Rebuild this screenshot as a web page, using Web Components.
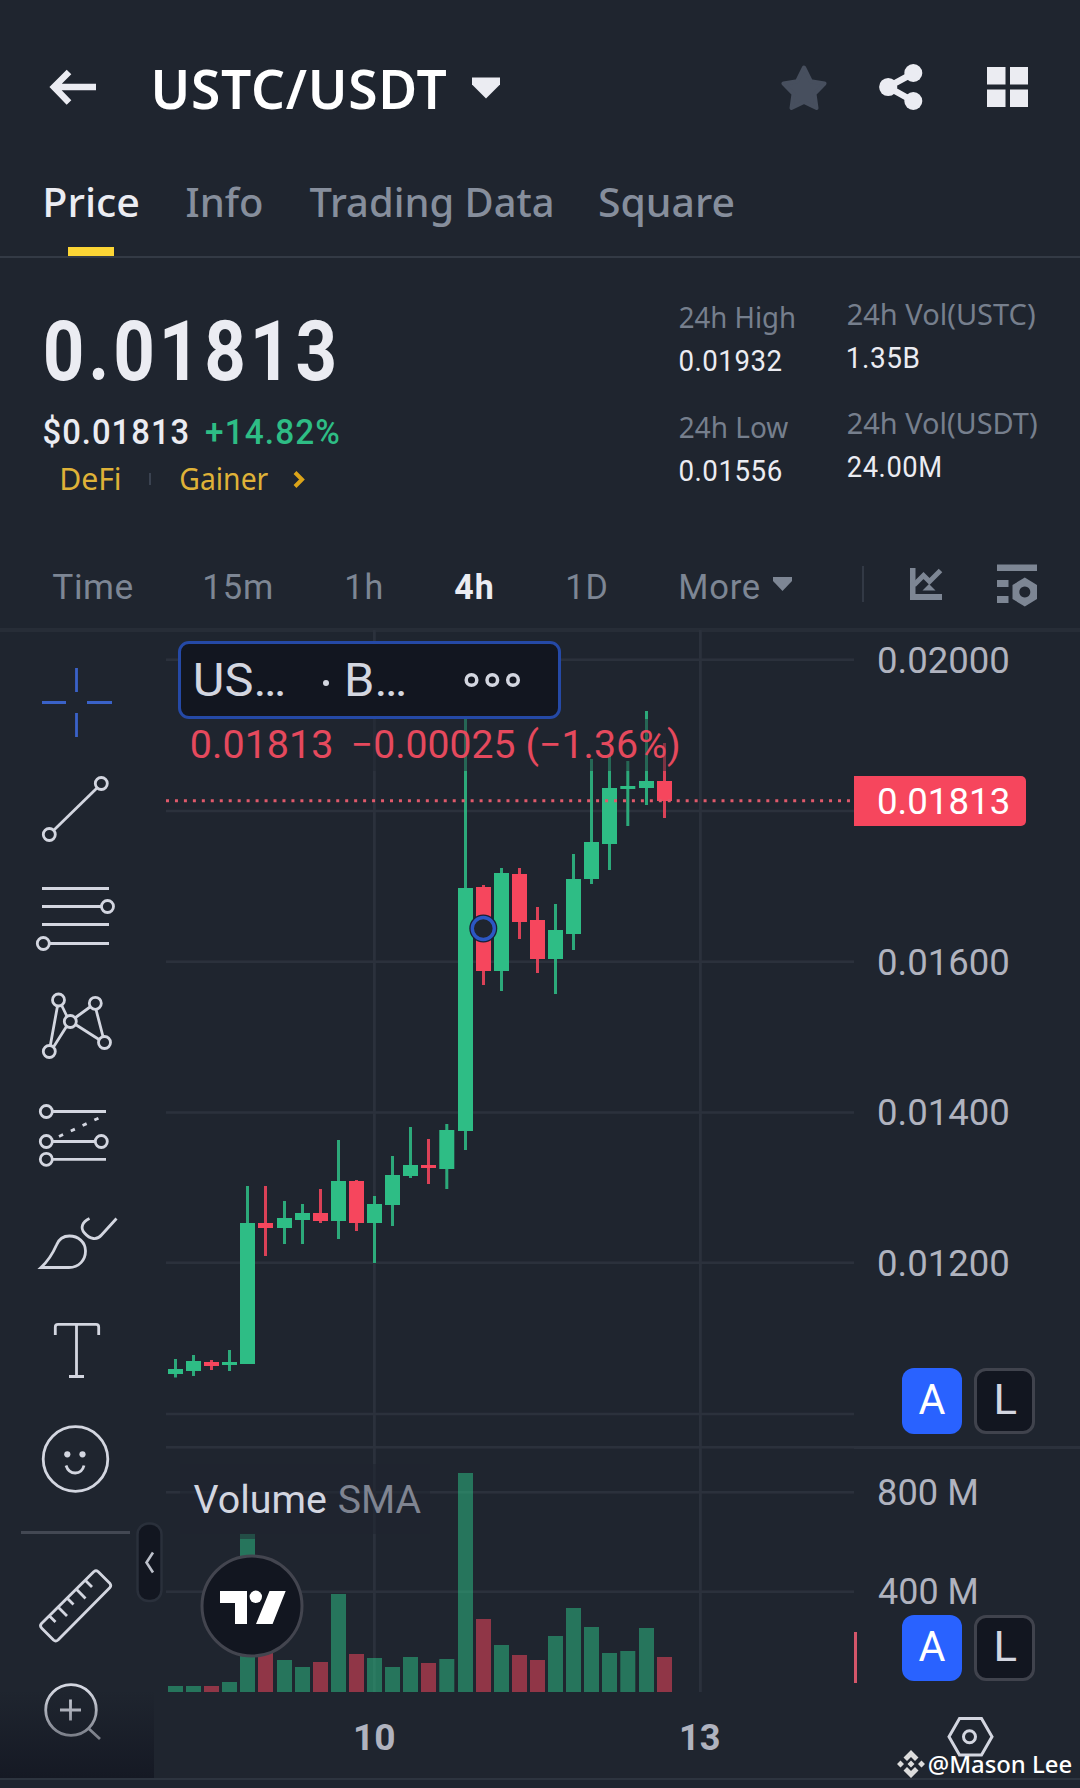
<!DOCTYPE html>
<html lang="en">
<head>
<meta charset="utf-8">
<title>USTC/USDT</title>
<style>
html,body{margin:0;background:#1f252f}
body{width:1080px;height:1788px;overflow:hidden;font-family:Roboto,"Noto Sans",sans-serif}
</style>
</head>
<body>
<trade-screen>
  <app-header pair="USTC/USDT"></app-header>
  <nav-tabs></nav-tabs>
  <ticker-summary></ticker-summary>
  <interval-bar></interval-bar>
  <chart-panel></chart-panel>
</trade-screen>
<script>
const define = (name, html, setup) => {
  const tpl = document.createElement('template');
  tpl.innerHTML = html;
  customElements.define(name, class extends HTMLElement {
    constructor() {
      super();
      this.attachShadow({mode: 'open'}).appendChild(tpl.content.cloneNode(true));
    }
    connectedCallback() { if (setup) setup(this, this.shadowRoot); }
  });
};

// A one-line label whose box is its ink: w is the ink width, h the cap height.
// k narrows the glyphs and gives the freed width to letter spacing.
const ctx = document.createElement('canvas').getContext('2d');
define('fit-text', `<style>
:host{display:block;flex:none}
span{display:block;white-space:nowrap;transform-origin:0 0;width:max-content}
</style><span><slot></slot></span>`, (el, root) => {
  const w = +el.getAttribute('w'), h = +el.getAttribute('h'), k = +(el.getAttribute('k') || 1);
  const cs = getComputedStyle(el), span = root.querySelector('span');
  const text = el.textContent.trim();
  ctx.font = `${cs.fontWeight} 200px ${cs.fontFamily}`;
  const cap = ctx.measureText('H').actualBoundingBoxAscent / 200;
  const m = ctx.measureText(text);
  const fs = h / cap;
  const ink = (m.actualBoundingBoxRight + m.actualBoundingBoxLeft) / 200 * fs;
  const s = w / ink * k;
  const a = Math.round(m.fontBoundingBoxAscent / 200 * fs), d = Math.round(m.fontBoundingBoxDescent / 200 * fs);
  el.style.width = w + 'px';
  el.style.height = h + 'px';
  span.style.fontSize = fs + 'px';
  span.style.lineHeight = h + 'px';
  if (k !== 1) span.style.letterSpacing = ink * (1 / k - 1) / (text.length - 1) + 'px';
  span.style.transform = `translate(${m.actualBoundingBoxLeft / 200 * fs * s}px,${h - (h / 2 + (a - d) / 2)}px) scaleX(${s})`;
});

define('app-header', `<style>
:host{display:flex;height:172px;box-sizing:border-box;padding:64px 51px 0 49px;align-items:flex-start;color:#fff}
svg{display:block;flex:none}
fit-text{font-family:"Noto Sans",sans-serif;font-weight:600;margin:6.500px 0 0 57px}
.caret{margin:13px 0 0 26px}
.actions{margin-left:auto;display:flex;gap:52px}
</style>
<svg width="49" height="46" viewBox="49 64 49 46"><path d="M96 87H55M69 72L54 87L69 102.500" fill="none" stroke="#ebecf2" stroke-width="6.500"/></svg>
<fit-text w="291" h="38.500" k=".98">USTC/USDT</fit-text>
<svg class="caret" width="28" height="22" viewBox="0 0 28 22"><path d="M0 .5H28V7.500L14 21.500L0 7.500Z" fill="#ebecf2"/></svg>
<div class="actions">
<svg width="46" height="48" viewBox="781.500 64.500 46 48"><path d="M804.500 68L811.300 81.700L825 84L815 94.300L817 108.500L804.500 102.500L792 108.500L794 94.300L784 84L797.700 81.700Z" fill="#474f5e" stroke="#474f5e" stroke-width="4" stroke-linejoin="round"/></svg>
<svg width="44" height="48" viewBox="879 64 44 48"><g fill="#ebecf2" stroke="#ebecf2"><path d="M913 73.300L888 87L913 101" fill="none" stroke-width="6.500"/><g stroke="none"><circle cx="888.200" cy="87" r="9.100"/><circle cx="913.300" cy="73" r="9"/><circle cx="913.300" cy="101" r="9"/></g></g></svg>
<svg style="margin-left:12px" width="42" height="48" viewBox="987 64 42 48"><path d="M987 67h18.500v17.500H987zM1010 67h18v17.500h-18zM987 89.500h18.500V107H987zM1010 89.500h18V107h-18z" fill="#ebecf2"/></svg>
</div>`);

define('nav-tabs', `<style>
:host{display:flex;height:86px;box-sizing:border-box;border-bottom:2px solid #333a45;padding:17.300px 0 0 46px;font-family:"Noto Sans",sans-serif;font-weight:500;color:#868e9c}
.tab{display:flex;flex-direction:column;align-items:center;justify-content:space-between}
.on{color:#ebecf2}
.on::after{content:"";width:46px;height:9px;background:#fcd535;margin-right:2px}
.i{margin-left:49px}.t{margin-left:48.500px}.s{margin-left:48.500px}
</style>
<div class="tab on"><fit-text w="92" h="28.500">Price</fit-text></div>
<div class="tab i"><fit-text w="74.500" h="28.500">Info</fit-text></div>
<div class="tab t"><fit-text w="241.500" h="28.500">Trading Data</fit-text></div>
<div class="tab s"><fit-text w="133" h="28.500">Square</fit-text></div>`);

define('stat-cell', `<style>
:host{display:block}
.l{color:#767f8d;font-family:"Noto Sans",sans-serif}
.v{color:#ebecf2;margin-top:22px;height:21px}
</style><div class="l"></div><div class="v"></div>`, (el, root) => {
  const put = (sel, key, k) => {
    const t = document.createElement('fit-text');
    t.textContent = el.getAttribute(key);
    t.setAttribute('w', el.getAttribute(key + '-w'));
    t.setAttribute('h', 21);
    t.setAttribute('k', k);
    root.querySelector(sel).replaceChildren(t);
  };
  put('.l', 'label', 1); put('.v', 'value', .97);
});

define('ticker-summary', `<style>
:host{display:flex;height:290px;box-sizing:border-box;padding-top:46px;color:#ebecf2}
.left{width:680px;padding:17px 0 0 46px;box-sizing:border-box}
.big{font-weight:700}
.row{display:flex}
.fiat{margin:39px 0 0 -2px;font-weight:500}
.up{color:#2ebd85;margin-left:18.500px}
.tags{margin:24.500px 0 0 16px;color:#dfb238;font-family:"Noto Sans",sans-serif}
.sep{width:2px;height:12px;background:#3a4250;margin:4px 29.500px 0}
svg{margin:2px 0 0 25px}
.c1{width:167.500px;padding-top:3px}
.c1 stat-cell+stat-cell{margin-top:46px}
.c2 stat-cell+stat-cell{margin-top:45px}
</style>
<div class="left">
<fit-text class="big" w="288" h="59" k=".92">0.01813</fit-text>
<div class="row fiat"><fit-text w="143.500" h="25" k=".95">$0.01813</fit-text><fit-text class="up" w="132.500" h="25" k=".95">+14.82%</fit-text></div>
<div class="row tags"><fit-text w="57.500" h="21.500">DeFi</fit-text><div class="sep"></div><fit-text w="87" h="21.500">Gainer</fit-text><svg width="12" height="17" viewBox="0 0 12 17"><path d="M2 1.500L9 8.500L2 15.500" fill="none" stroke="#dba419" stroke-width="4"/></svg></div>
</div>
<div class="c1"><stat-cell label="24h High" label-w="114" value="0.01932" value-w="101"></stat-cell><stat-cell label="24h Low" label-w="108" value="0.01556" value-w="101"></stat-cell></div>
<div class="c2"><stat-cell label="24h Vol(USTC)" label-w="186.500" value="1.35B" value-w="70.500"></stat-cell><stat-cell label="24h Vol(USDT)" label-w="188.500" value="24.00M" value-w="92"></stat-cell></div>`);

define('interval-bar', `<style>
:host{display:flex;height:80px;box-sizing:border-box;padding:16px 0 0 53px;color:#7d8694}
fit-text{margin-top:10px}
.on{color:#ebecf2;font-weight:700}
.caret{margin:13px 0 0 14px}
.bar{width:2px;height:36px;background:#323945;margin:2px 46px 0 70px}
</style>
<fit-text w="79" h="25" k=".98">Time</fit-text>
<fit-text style="margin-left:73px" w="66" h="25" k=".97">15m</fit-text>
<fit-text style="margin-left:75.500px" w="34" h="25" k=".97">1h</fit-text>
<fit-text style="margin-left:74px" class="on" w="37" h="25" k=".97">4h</fit-text>
<fit-text style="margin-left:76px" w="38" h="25" k=".97">1D</fit-text>
<fit-text style="margin-left:75.500px" w="78" h="25" k=".97">More</fit-text>
<svg class="caret" width="19" height="14" viewBox="0 0 19 14"><path d="M0 0H19V4L9.500 14L0 4Z" fill="#7d8694"/></svg>
<div class="bar"></div>
<svg width="34" height="44" viewBox="911 564 34 44"><g fill="#7d8694"><path d="M911 568h5.500v26H943v6H911z"/><path d="M915 585L924.500 575.500L930.500 581.500L941.500 570.500" fill="none" stroke="#7d8694" stroke-width="5"/><path d="M923.500 590.500L930 584L936.500 590.500Z"/></g></svg>
<svg style="margin-left:53px" width="42" height="44" viewBox="998 564 42 44"><path fill="#7d8694" fill-rule="evenodd" d="M998 564.500h40v6.500h-40zM998 580h11.500v7H998zM998 596h11.500v7H998zM1025.800 577.500L1038 585V599L1025.800 606.500L1013.500 599V585ZM1025.800 586.500a5.500 5.500 0 1 0 .01 0Z"/></svg>`);

define('tool-rail', `<style>
:host{display:flex;flex-direction:column;width:154px}
svg{display:block;flex:none;fill:none;stroke:#d3d6e0;stroke-width:2.800}
.foot{background:linear-gradient(#1f252f00 30px,#151924 100%)}
.foot svg{mask-image:linear-gradient(#000 30px,#0008 75px)}
</style>
<svg width="154" height="115" viewBox="0 633 154 115"><path stroke="#3a62c8" d="M76.500 668V692M76.500 713V737M42 702.500H66M87 702.500H112"/></svg>
<svg width="154" height="112" viewBox="0 748 154 112"><path d="M54 830L97 788"/><circle cx="101.300" cy="783.500" r="6"/><circle cx="49.300" cy="834.500" r="6"/></svg>
<svg width="154" height="110" viewBox="0 860 154 110"><path d="M42 888.500H109M42 906.500H101M42 924.500H109M50 943.500H109"/><circle cx="107.500" cy="906.500" r="6"/><circle cx="43.300" cy="943.500" r="6"/></svg>
<svg width="154" height="110" viewBox="0 970 154 110"><path d="M57.500 1006L50.300 1045.500M61.500 1005L67 1016.500M53.500 1047L66.500 1026.500M75 1018L90 1007M75.500 1024.500L99 1039.500M96 1009.500L103 1036.500"/><circle cx="58.500" cy="1000" r="6"/><circle cx="95.300" cy="1003.300" r="6"/><circle cx="70.300" cy="1021.500" r="6"/><circle cx="104.500" cy="1042.500" r="6"/><circle cx="49.300" cy="1051.500" r="6"/></svg>
<svg width="154" height="110" viewBox="0 1080 154 110"><path d="M52.500 1111.500H106M52.500 1141.500H95M52.500 1159.300H106"/><path d="M59 1136.500L102 1116.500" stroke-dasharray="4.500 8.500"/><circle cx="46.300" cy="1111.500" r="6"/><circle cx="101.300" cy="1141.500" r="6"/><circle cx="46.300" cy="1141.500" r="6"/><circle cx="46.300" cy="1159.300" r="6"/></svg>
<svg width="154" height="105" viewBox="0 1190 154 105"><path d="M41 1267.500H69C79 1267.500 85.500 1260 85.500 1251C85.500 1242 78 1236 69.500 1236C62 1236 58.500 1240 56.500 1245C53 1253 47.500 1261.500 41 1267.500ZM89.500 1218.500C82 1222 80 1228 84.500 1233C90 1239.500 97 1240.500 101.500 1235L116.500 1218.500"/></svg>
<svg width="154" height="105" viewBox="0 1295 154 105"><path d="M55.300 1335V1327Q55.300 1324.300 58 1324.300H96Q98.700 1324.300 98.700 1327V1335M76.500 1324V1376.500M69 1376.500H84"/></svg>
<svg width="154" height="125" viewBox="0 1400 154 125"><circle cx="75.500" cy="1459" r="32.300"/><path d="M66 1465.500Q68.500 1473 75.300 1473T84 1465.500"/><g fill="#d3d6e0" stroke="none"><circle cx="67.300" cy="1454.300" r="3.100"/><circle cx="82.500" cy="1454.300" r="3.100"/></g></svg>
<svg width="154" height="135" viewBox="0 1525 154 135"><path stroke="#434853" d="M21 1532.500H130"/><path stroke-linejoin="round" d="M94 1571.500Q96 1570 98 1571.500L110 1583.500Q111.500 1585.500 110 1587.500L58 1640Q55.700 1642 53.500 1640L41.500 1628Q39.500 1625.500 41.500 1623.500ZM49.500 1616L55.500 1622M58.500 1607.500L67 1616M67.500 1598.500L73.500 1604.500M76.700 1589.500L85.500 1598.500M85.500 1580.500L92 1587"/></svg>
<div class="foot"><svg width="154" height="118" viewBox="0 1659.500 154 118"><circle cx="71" cy="1709.500" r="25.300"/><path d="M60 1709.500H81M70.500 1699V1720M88 1727.500L100 1738.500"/></svg></div>`);

const G = '#2ebd85', R = '#f6465d';
// x, high, body top, body bottom, low, up, volume top
const candles = [
[175.5,1359,1369,1374,1377.5,1,1686],[193.5,1355,1361,1371,1376,1,1686],[211.5,1360,1362,1366,1370,0,1686],[229.5,1350,1362,1365,1371,1,1682],
[247.5,1186,1223,1364,1364,1,1534],[265.5,1186,1223,1228,1256,0,1640],[284.5,1201,1218,1228,1244,1,1660],[302.5,1204,1213,1220,1244,1,1667],
[320.5,1189,1213,1221,1223,0,1662],[338.5,1140,1181,1221,1239,1,1594],[356.5,1180,1181,1223,1231,0,1654],[374.5,1196,1204,1223,1263,1,1658],
[392.5,1156,1175,1205,1226,1,1667],[410.5,1127,1165,1176,1178,1,1657],[428.5,1139,1165,1168,1184,0,1663],[446.8,1124,1130,1169,1189,1,1659],
[465.5,700,888,1131,1150,1,1473],[483.5,885,887,971,985,0,1619],[501.5,868,873,971,991,1,1645],[519.5,868,874,922,939,0,1655],
[537.5,907,920,959,973,0,1660],[555.5,904,930,959,994,1,1636],[573.5,854,879,934,950,1,1608],[591.5,759,842,879,884,1,1627],
[609.5,756,788,844,870,1,1653],[627.8,761,786,789,826,1,1651],[646.5,711,781,788,805,1,1628],[664.5,743,781,801,818,0,1657]];

define('candle-canvas', `<style>:host{display:block;width:700px;height:1066px}svg{display:block}</style>
<svg width="700" height="1066" viewBox="154 628 700 1066"></svg>`, (el, root) => {
  let s = '<g fill="#2b313c">';
  for (const x of [373, 699]) s += `<rect x="${x}" y="630" width="2.800" height="1062"/>`;
  for (const y of [659.7, 811, 961.7, 1112.5, 1262.7, 1414, 1492.3, 1591.7]) s += `<rect x="166" y="${y - 1.3}" width="688" height="2.600"/>`;
  s += '<rect x="166" y="1446" width="688" height="2.600"/></g>';
  s += '<rect x="180" y="1464" width="250" height="70" fill="#1f252f" opacity=".55"/>';
  for (const [x,,,,, up, v] of candles) s += `<rect x="${x - 7.5}" y="${v}" width="15" height="${1692 - v}" fill="${up ? G : R}" opacity=".53"/>`;
  s += '<rect x="238" y="1533" width="20" height="6" fill="#1f252f" opacity=".5"/>';
  for (const [x, hi, t, b, lo, up] of candles) {
    const c = up ? G : R;
    s += `<rect x="${x - 1.5}" y="${hi}" width="3" height="${lo - hi}" fill="${c}" opacity=".87"/><rect x="${x - 7.5}" y="${t}" width="15" height="${b - t}" fill="${c}"/>`;
  }
  s += `<path d="M166 800.700H854" stroke="#e0596b" stroke-width="2.900" stroke-dasharray="3 5.960"/>`;
  s += '<rect x="180" y="719" width="505" height="52" fill="#1f252f" opacity=".5"/>';
  s += '<circle cx="483.300" cy="928.500" r="14" fill="#182035"/><circle cx="483.300" cy="928.500" r="11" fill="#1f252f" stroke="#2c57c4" stroke-width="3.400"/>';
  root.querySelector('svg').innerHTML = s;
});

define('scale-buttons', `<style>
:host{display:flex;gap:12px;height:66px;padding-left:48px;color:#fff}
div{box-sizing:border-box;width:60px;height:66px;border-radius:12px;display:flex;padding:16px 0 0 17px}
.a{background:#2962ff}.l{width:61px;background:#121620;border:3px solid #40434d;padding:13px 0 0 19.500px;color:#d3d6e0}
</style><div class="a"><fit-text w="26" h="30">A</fit-text></div><div class="l"><fit-text w="19" h="30">L</fit-text></div>`);

define('price-axis', `<style>
:host{display:flex;flex-direction:column;width:226px;color:#b0b3bf}
fit-text{margin-left:25px}
.tag{width:172px;height:50px;background:${R};border-radius:0 5px 5px 0;color:#fff;box-sizing:border-box;padding-top:12px;margin-top:102.500px}
hr{border:0;margin:12px 0 0;height:2.600px;background:#2b313c}
.mark{width:3.500px;height:51px;background:#d4566a;margin:17px 45px 0 -.5px}
.bottom{display:flex;margin-top:11px}
.bottom scale-buttons{padding-left:0}
</style>
<fit-text style="margin-top:19px" w="129" h="26">0.02000</fit-text>
<div class="tag"><fit-text w="129" h="26">0.01813</fit-text></div>
<fit-text style="margin-top:123.500px" w="129" h="26">0.01600</fit-text>
<fit-text style="margin-top:124px" w="129" h="26">0.01400</fit-text>
<fit-text style="margin-top:125px" w="129" h="26">0.01200</fit-text>
<scale-buttons style="margin-top:92px"></scale-buttons>
<hr>
<fit-text style="margin-top:30.400px" w="97" h="26">800 M</fit-text>
<fit-text style="margin-top:73px" w="97" h="26">400 M</fit-text>
<div class="bottom"><div class="mark"></div><scale-buttons></scale-buttons></div>`);

define('chart-legend', `<style>
:host{display:block;color:#d3d6e0}
.box{box-sizing:border-box;width:383px;height:78px;border:3px solid #2549a6;border-radius:11px;background:#121620;display:flex;padding:20px 0 0 15px}
.dot{width:6px;height:6px;border-radius:3px;background:#d3d6e0;margin:15.500px 18.500px 0 40px}
svg{margin:8px 0 0 60.500px}
.vals{display:flex;color:#e5495d;margin:12px 0 0 14px}
</style>
<div class="box"><fit-text w="87" h="33.500">US…</fit-text><div class="dot"></div><fit-text w="56" h="33.500">B…</fit-text><svg width="60" height="16" viewBox="464 672 60 16"><g fill="none" stroke="#d3d6e0" stroke-width="3.500"><circle cx="471.500" cy="680" r="5.300"/><circle cx="492.300" cy="680" r="5.300"/><circle cx="513" cy="680" r="5.300"/></g></svg></div>
<div class="vals"><fit-text w="139" h="27.500">0.01813</fit-text><fit-text style="margin-left:23px" w="160" h="27.500">−0.00025</fit-text><fit-text style="margin-left:13.500px" w="150" h="27.500">(−1.36%)</fit-text></div>`);

define('chart-panel', `<style>
:host{position:relative;display:grid;grid-template-columns:154px 700px 226px;grid-template-rows:1066px 84px 10px;box-shadow:inset 0 4px #272d37}
tool-rail{grid-row:1/3;padding-top:5px}
.time{grid-column:2;grid-row:2;display:flex;color:#b0b3bf;font-weight:700;padding:29.500px 0 0 201.500px}
.gear{grid-column:3;grid-row:2;padding:20px 0 0 90.500px}
.end{grid-column:1/4;grid-row:3;border-top:2px solid #2d343f}
chart-legend{position:absolute;left:178px;top:13px}
.over{position:absolute}
.study{left:193.500px;top:857px;display:flex;gap:14px;color:#d3d6e0}
.study fit-text+fit-text{color:#7f8491}
.logo{left:200px;top:926px}
.handle{left:136px;top:894px}
.mark{right:9px;bottom:10px;display:flex;color:#fff;font-family:"Noto Sans",sans-serif;font-weight:500}
.mark svg{margin-right:4px}
.mark fit-text{margin-top:5.500px}
</style>
<tool-rail></tool-rail>
<candle-canvas></candle-canvas>
<price-axis></price-axis>
<div class="time"><fit-text w="38" h="26.500">10</fit-text><fit-text style="margin-left:288.500px" w="37" h="26.500">13</fit-text></div>
<div class="gear"><svg width="50" height="46" viewBox="945 1714 50 46"><g fill="none" stroke="#d3d6e0" stroke-width="3"><path d="M949 1736.700L959.500 1718.500H981.500L992 1736.700L981.500 1755H959.500Z"/><circle cx="969.500" cy="1736.700" r="6"/></g></svg></div>
<div class="end"></div>
<chart-legend></chart-legend>
<div class="over study"><fit-text w="131.500" h="28">Volume</fit-text><fit-text w="81.500" h="28">SMA</fit-text></div>
<svg class="over logo" width="104" height="104" viewBox="200 1554 104 104"><circle cx="252" cy="1606" r="50" fill="#121620" stroke="#43454f" stroke-width="3"/><g fill="#fff"><path d="M220 1591H247V1624H235V1603H220ZM269.500 1591H285.700L272.600 1624H256Z"/><circle cx="255.800" cy="1596.800" r="6.200"/></g></svg>
<svg class="over handle" width="27" height="81" viewBox="136 1522 27 81"><rect x="137.500" y="1523.500" width="24" height="77.500" rx="11" fill="#121620" stroke="#2a303b" stroke-width="2.500"/><path d="M153 1552.500L146.500 1562.500L153 1572.500" fill="none" stroke="#bcc0ca" stroke-width="2.600"/></svg>
<div class="over mark"><svg width="28" height="28" viewBox="0 0 28 28"><g fill="#dcdcdc"><path d="M14 0L21.500 7.500L18 11L14 7L10 11L6.500 7.500ZM14 28L21.500 20.500L18 17L14 21L10 17L6.500 20.500ZM3.500 10.500L7 14L3.500 17.500L0 14ZM24.500 10.500L28 14L24.500 17.500L21 14ZM14 10.500L17.500 14L14 17.500L10.500 14Z"/></g></svg><fit-text w="142" h="17">@Mason Lee</fit-text></div>`);

define('trade-screen', `<style>:host{display:flex;flex-direction:column;width:1080px;height:1788px;background:#1f252f;overflow:hidden}</style><slot></slot>`);
</script>
</body>
</html>
